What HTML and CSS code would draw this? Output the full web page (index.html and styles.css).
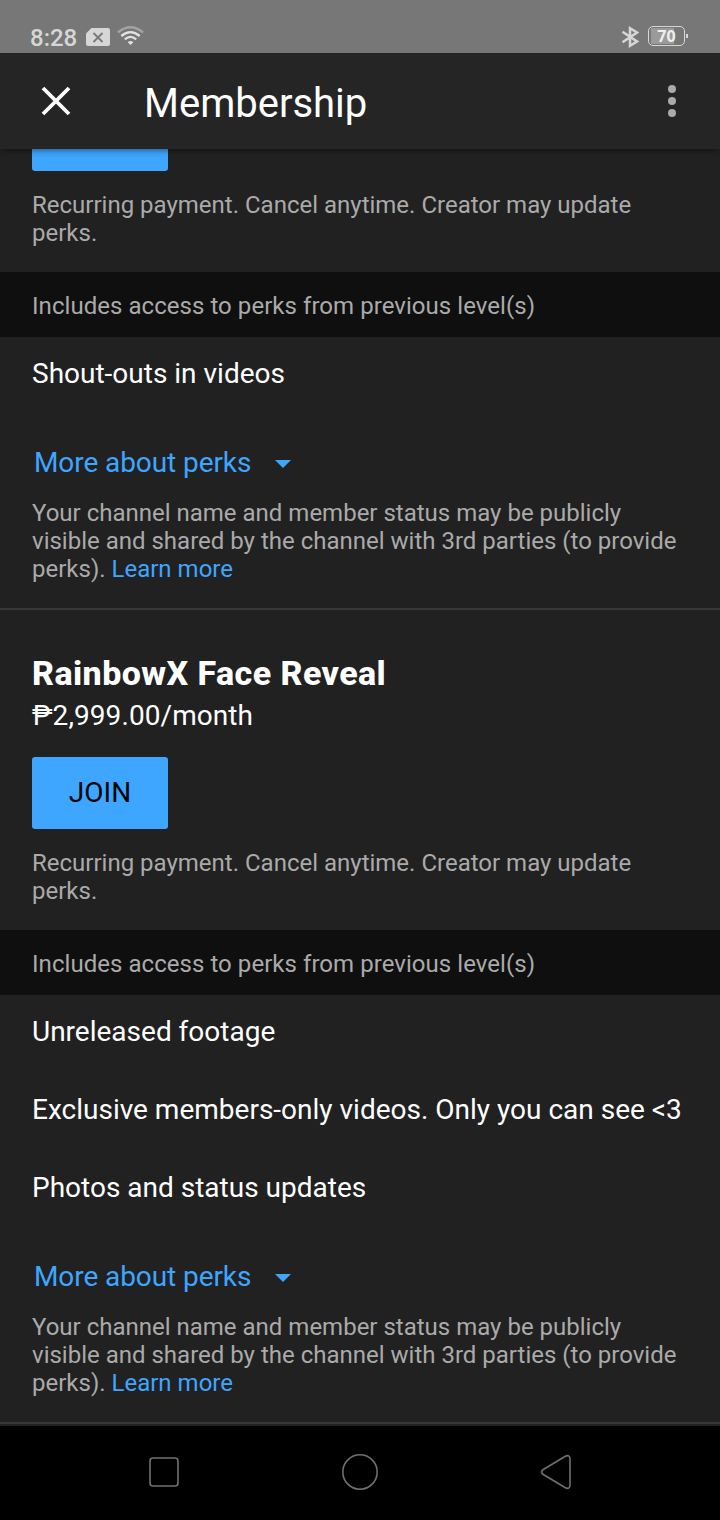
FILE: index.html
```
<!DOCTYPE html>
<html lang="en">
<head>
    <meta charset="UTF-8">
    <meta name="viewport" content="width=device-width, initial-scale=1.0">
    <title>Membership</title>
    <link rel="stylesheet" href="styles.css">
</head>
<body>
    <div class="status-bar">
        <span class="time">8:28</span>
        <svg class="sim" width="24" height="18" viewBox="0 0 24 18">
            <path d="M5.500 0H22a2 2 0 0 1 2 2v14a2 2 0 0 1-2 2H2a2 2 0 0 1-2-2V5.500z" fill="#d6d6d6"/>
            <path d="M7.500 5l9 9M16.500 5l-9 9" stroke="#777" stroke-width="1.800"/>
        </svg>
        <svg class="wifi" width="27" height="20" viewBox="0 0 27 20" fill="none" stroke="#e2e2e2" stroke-width="2.300">
            <path d="M1 6.500Q13.500-3.900 26 6.500" stroke="#a3a3a3"/>
            <path d="M4.300 10Q13.500 2.300 22.700 10"/>
            <path d="M7.800 13.300Q13.500 8.500 19.200 13.300"/>
            <path d="M10.700 16.200Q13.500 13.700 16.300 16.200L13.500 19z" fill="#e2e2e2" stroke="none"/>
        </svg>
        <svg class="bluetooth" width="18" height="22" viewBox="0 0 18 22" fill="none" stroke="#d6d6d6" stroke-width="2.500">
            <path d="M1.500 5.800L16 15.500 9 19.700V2.300L16 6.500 1.500 16.200"/>
        </svg>
        <div class="battery"><span>70</span></div>
    </div>
    <header class="toolbar">
        <svg class="close" width="30" height="30" viewBox="0 0 30 30" stroke="#fff" stroke-width="3.800">
            <path d="M2 2l26 26M28 2L2 28"/>
        </svg>
        <h1>Membership</h1>
        <svg class="menu" width="8" height="32" viewBox="0 0 8 32" fill="#aaa">
            <circle cx="4" cy="4" r="4"/>
            <circle cx="4" cy="16" r="4"/>
            <circle cx="4" cy="28" r="4"/>
        </svg>
    </header>
    <main>
        <section class="level scrolled">
            <button class="join">JOIN</button>
            <p class="note">Recurring payment. Cancel anytime. Creator may update<br>perks.</p>
            <div class="includes">Includes access to perks from previous level(s)</div>
            <ul class="perks">
                <li>Shout-outs in videos</li>
            </ul>
            <div class="more">
                <span>More about perks</span>
                <svg width="16" height="8" viewBox="0 0 16 8"><path d="M0 0h16L8 8z" fill="#3ea6ff"/></svg>
            </div>
            <p class="note privacy">Your channel name and member status may be publicly<br>visible and shared by the channel with 3rd parties (to provide<br>perks). <a href="#">Learn more</a></p>
        </section>
        <section class="level">
            <h2>RainbowX Face Reveal</h2>
            <p class="price">₱2,999.00/month</p>
            <button class="join">JOIN</button>
            <p class="note">Recurring payment. Cancel anytime. Creator may update<br>perks.</p>
            <div class="includes">Includes access to perks from previous level(s)</div>
            <ul class="perks">
                <li>Unreleased footage</li>
                <li>Exclusive members-only videos. Only you can see &lt;3</li>
                <li>Photos and status updates</li>
            </ul>
            <div class="more">
                <span>More about perks</span>
                <svg width="16" height="8" viewBox="0 0 16 8"><path d="M0 0h16L8 8z" fill="#3ea6ff"/></svg>
            </div>
            <p class="note privacy">Your channel name and member status may be publicly<br>visible and shared by the channel with 3rd parties (to provide<br>perks). <a href="#">Learn more</a></p>
        </section>
    </main>
    <nav class="nav-bar">
        <svg width="36" height="36" viewBox="0 0 36 36"><rect x="4" y="4" width="28" height="28" rx="3"/></svg>
        <svg width="36" height="36" viewBox="0 0 36 36"><circle cx="18" cy="18" r="17.200"/></svg>
        <svg width="36" height="36" viewBox="0 0 36 36"><path d="M4.500 16L27 2.500Q32 0 32 5V31Q32 36 27 33.500L4.500 20Q2.500 18 4.500 16z"/></svg>
    </nav>
</body>
</html>
```
FILE: styles.css
```
* {
    box-sizing: border-box;
}
body {
    margin: 0;
    height: 1520px;
    display: flex;
    flex-direction: column;
    overflow: hidden;
    background-color: #212121;
    color: #fff;
    font-family: Roboto, sans-serif;
}
h1, h2, p, ul {
    margin: 0;
    padding: 0;
    font-weight: 400;
}
.status-bar {
    display: flex;
    align-items: center;
    height: 53px;
    flex: none;
    padding: 20px 32px 0 30px;
    background-color: #777;
    color: #d6d6d6;
}
.time {
    width: 56px;
    font-size: 24px;
    font-weight: 500;
    line-height: 36px;
    padding-top: 3px;
}
.wifi {
    margin: -1px auto 0 7px;
}
.bluetooth {
    margin-right: 9px;
}
.battery {
    display: flex;
    align-items: center;
    width: 40px;
    margin-top: -2px;
}
.battery span {
    width: 37px;
    height: 20px;
    border: 1px solid #d6d6d6;
    border-radius: 5px;
    background: linear-gradient(#9a9a9a, #9a9a9a) 2px 1px / 23px 16px no-repeat;
    font: bold 16px/18px "Noto Sans", sans-serif;
    text-align: center;
    color: #eee;
}
.battery::after {
    content: "";
    width: 2px;
    height: 4px;
    margin-left: 1px;
    background-color: #d6d6d6;
}
.toolbar {
    position: relative;
    z-index: 1;
    display: flex;
    align-items: center;
    height: 96px;
    flex: none;
    padding: 0 44px 0 41px;
    background-color: #252525;
    box-shadow: 0 4px 6px -2px rgba(0, 0, 0, 0.4);
}
.toolbar h1 {
    margin: 6px auto 0 73px;
    font-size: 40px;
    line-height: 48px;
}
main {
    height: 1277px;
    flex: none;
}
.level {
    padding: 44px 0 25px;
    border-bottom: 2px solid #383838;
}
/* first level is partly scrolled under the toolbar */
.level.scrolled {
    padding-top: 0;
    margin-top: -50px;
}
.level h2 {
    padding-left: 32px;
    font-size: 34px;
    font-weight: 800;
    letter-spacing: 0.43px;
    line-height: 38px;
}
.price {
    margin: 7px 32px 24px;
    font-size: 28px;
    letter-spacing: 0.08px;
    line-height: 34px;
}
.join {
    display: block;
    width: 136px;
    height: 72px;
    margin-left: 32px;
    padding: 0 0 2px;
    border: none;
    border-radius: 3px;
    background-color: #3ea6ff;
    color: #030303;
    font-family: Roboto, sans-serif;
    font-size: 28px;
}
.note {
    padding: 20px 0 25px 32px;
    color: #aaa;
    font-size: 24px;
    line-height: 28px;
    white-space: nowrap;
}
.note.privacy {
    padding: 9px 0 0 32px;
}
.note a {
    color: #3ea6ff;
    text-decoration: none;
}
.includes {
    height: 65px;
    padding-left: 32px;
    background-color: #0f0f0f;
    color: #aaa;
    font-size: 24px;
    letter-spacing: 0.05px;
    line-height: 69px;
}
.perks {
    padding: 20px 0 0 32px;
    list-style: none;
}
.perks li {
    margin-bottom: 44px;
    font-size: 28px;
    line-height: 34px;
    white-space: nowrap;
}
.more {
    display: flex;
    align-items: center;
    height: 56px;
    margin-top: -1px;
    padding-left: 34px;
    color: #3ea6ff;
    font-size: 28px;
    letter-spacing: -0.08px;
}
.more svg {
    margin: 3px 0 0 24px;
}
.nav-bar {
    display: flex;
    justify-content: space-between;
    align-items: center;
    height: 94px;
    flex: none;
    padding: 0 146px 2px;
    background-color: #000;
}
.nav-bar svg {
    fill: none;
    stroke: #707070;
    stroke-width: 1.6;
}
```
